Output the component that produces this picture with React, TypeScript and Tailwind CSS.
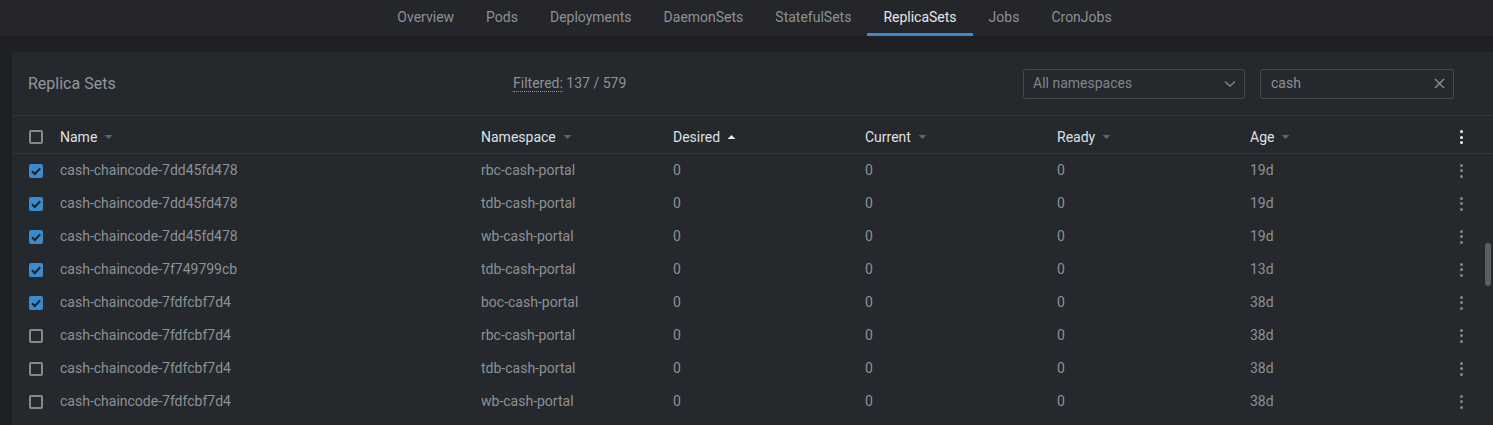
import React from 'react';

const tabs = ['Overview', 'Pods', 'Deployments', 'DaemonSets', 'StatefulSets', 'ReplicaSets', 'Jobs', 'CronJobs'];

type Row = { name: string; ns: string; age: string; checked: boolean };

const rows: Row[] = [
  { name: 'cash-chaincode-7dd45fd478', ns: 'rbc-cash-portal', age: '19d', checked: true },
  { name: 'cash-chaincode-7dd45fd478', ns: 'tdb-cash-portal', age: '19d', checked: true },
  { name: 'cash-chaincode-7dd45fd478', ns: 'wb-cash-portal', age: '19d', checked: true },
  { name: 'cash-chaincode-7f749799cb', ns: 'tdb-cash-portal', age: '13d', checked: true },
  { name: 'cash-chaincode-7fdfcbf7d4', ns: 'boc-cash-portal', age: '38d', checked: true },
  { name: 'cash-chaincode-7fdfcbf7d4', ns: 'rbc-cash-portal', age: '38d', checked: false },
  { name: 'cash-chaincode-7fdfcbf7d4', ns: 'tdb-cash-portal', age: '38d', checked: false },
  { name: 'cash-chaincode-7fdfcbf7d4', ns: 'wb-cash-portal', age: '38d', checked: false },
];

const gridCols = 'grid grid-cols-[48px_421px_192px_192px_192px_193px_198px_26px]';

function Checkbox({ checked }: { checked: boolean }) {
  if (checked) {
    return (
      <div className="w-[14px] h-[14px] rounded-[2px] bg-[#3a8ad0] flex items-center justify-center">
        <svg width="12" height="12" viewBox="0 0 12 12">
          <path d="M2 6.2 L4.8 9 L10.2 3.2" stroke="#1e2124" strokeWidth="2" fill="none" />
        </svg>
      </div>
    );
  }
  return <div className="w-[14px] h-[14px] rounded-[2px] border-2 border-[#86898c]" />;
}

function Caret({ up, active }: { up?: boolean; active?: boolean }) {
  return (
    <svg width="9" height="6" viewBox="0 0 9 6" className="ml-[7px]">
      {up ? (
        <path d="M0.5 5 L4.5 1 L8.5 5 Z" fill={active ? '#e6e7e8' : '#5f6468'} />
      ) : (
        <path d="M0.5 1 L4.5 5 L8.5 1 Z" fill={active ? '#e6e7e8' : '#5f6468'} />
      )}
    </svg>
  );
}

function Kebab({ color }: { color: string }) {
  return (
    <div className="flex flex-col items-center gap-[2.5px]">
      <span className={`w-[3px] h-[3px] rounded-full ${color}`} />
      <span className={`w-[3px] h-[3px] rounded-full ${color}`} />
      <span className={`w-[3px] h-[3px] rounded-full ${color}`} />
    </div>
  );
}

function HeaderCell({ label, up, active }: { label: string; up?: boolean; active?: boolean }) {
  return (
    <div className="flex items-center text-[14px] text-[#dfe1e3]">
      {label}
      <Caret up={up} active={active} />
    </div>
  );
}

export default function App() {
  return (
    <div
      className="relative h-[425px] w-full overflow-hidden bg-[#1e2023] flex flex-col"
      style={{ fontFamily: 'Roboto, "Noto Sans", sans-serif' }}
    >
      <nav className="h-[36px] shrink-0 bg-[#24262a] flex justify-center pl-4">
        {tabs.map((t) => (
          <div
            key={t}
            className={`px-4 h-full flex items-center text-[14px] border-b-[3px] ${
              t === 'ReplicaSets' ? 'text-[#e6e7e8] border-[#3a8ad0]' : 'text-[#8c9296] border-transparent'
            }`}
          >
            <span className="pt-[2px]">{t}</span>
          </div>
        ))}
      </nav>

      <div className="flex-1 mt-[16px] ml-[12px] bg-[#25282c]">
        <div className="h-[64px] flex items-center pl-4 pr-[39px] border-b border-[#33373b]">
          <div className="w-[485px] text-[16px] text-[#8f979d]">Replica Sets</div>
          <div className="flex-1 text-[14px] text-[#8c9296]">
            <span className="border-b border-dotted border-[#8c9296]">Filtered:</span> 137 / 579
          </div>
          <div className="w-[222px] h-[30px] border border-[#474b50] rounded-[3px] flex items-center justify-between pl-[9px] pr-[8px] text-[14px] text-[#7f868b]">
            <span>All namespaces</span>
            <svg width="12" height="8" viewBox="0 0 12 8">
              <path d="M1 1.5 L6 6 L11 1.5" stroke="#7f868b" strokeWidth="1.4" fill="none" />
            </svg>
          </div>
          <div className="ml-[15px] w-[194px] h-[30px] border border-[#474b50] rounded-[3px] flex items-center justify-between pl-[10px] pr-[8px] text-[14px] text-[#8c9296]">
            <span>cash</span>
            <svg width="11" height="11" viewBox="0 0 11 11">
              <path d="M1 1 L10 10 M10 1 L1 10" stroke="#8c9296" strokeWidth="1.4" fill="none" />
            </svg>
          </div>
        </div>

        <div className={`${gridCols} h-[38px] pt-[5px] items-center border-b border-[#33373b]`}>
          <div className="pl-[17px]">
            <Checkbox checked={false} />
          </div>
          <HeaderCell label="Name" />
          <HeaderCell label="Namespace" />
          <HeaderCell label="Desired" up active />
          <HeaderCell label="Current" />
          <HeaderCell label="Ready" />
          <HeaderCell label="Age" />
          <Kebab color="bg-[#f2f2f2]" />
        </div>

        {rows.map((r, i) => (
          <div key={i} className={`${gridCols} h-[33px] items-center text-[14px] text-[#8c9296]`}>
            <div className="pl-[17px]">
              <Checkbox checked={r.checked} />
            </div>
            <div>{r.name}</div>
            <div>{r.ns}</div>
            <div>0</div>
            <div>0</div>
            <div>0</div>
            <div>{r.age}</div>
            <Kebab color="bg-[#85898d]" />
          </div>
        ))}
      </div>

      <div className="absolute right-[2px] top-[243px] w-[6px] h-[43px] rounded-full bg-[#5b5f64]" />
    </div>
  );
}
